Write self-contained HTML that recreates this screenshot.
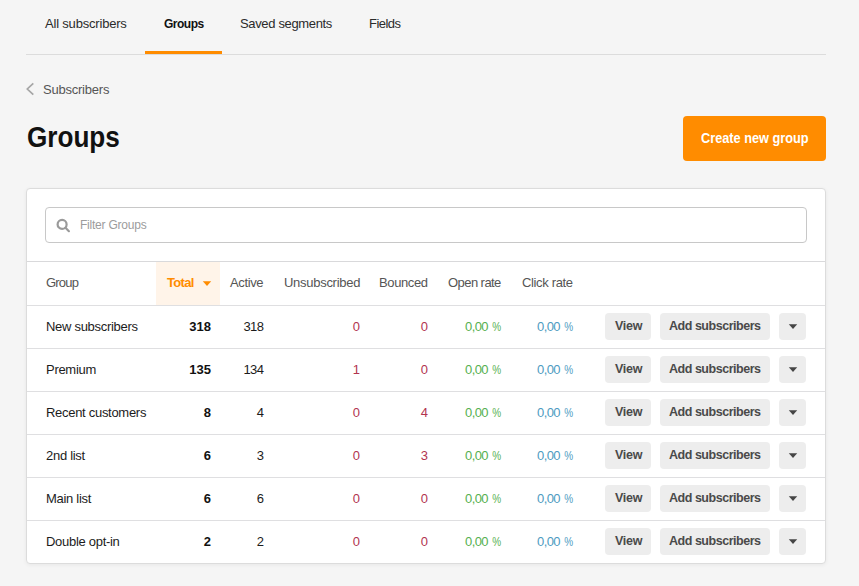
<!DOCTYPE html>
<html><head><meta charset="utf-8"><style>
*{box-sizing:border-box;margin:0;padding:0}
html,body{width:859px;height:586px;overflow:hidden;background:#f5f5f5;font-family:"Liberation Sans",sans-serif;color:#222}
.r0{position:absolute}
.t{position:absolute;white-space:nowrap;line-height:16px;font-size:13px}
.tab{color:#2b2b2b;font-size:13px}
.act{font-weight:bold;color:#111;font-size:12px}
.crumb{color:#555;font-size:13px}
.h1{font-size:29px;line-height:32px;font-weight:bold;color:#111;transform:scaleX(0.9);transform-origin:0 50%}
.obtn{background:#ff8c00;border-radius:4px}
.obt{color:#fff;font-weight:bold;font-size:14px;transform:scaleX(0.91);transform-origin:0 50%}
.card{background:#fff;border:1px solid #dcdcdc;border-radius:4px;box-shadow:0 1px 4px rgba(0,0,0,.06)}
.search{border:1px solid #c8c8c8;border-radius:4px}
.ph{color:#9c9c9c;font-size:12px}
.hd{color:#555}
.tot{color:#ff8c00;font-weight:bold}
.td{color:#1c1c1c}
.b{font-weight:bold;color:#111}
.red{color:#b2344f}
.grn{color:#55b04f}
.pcs{font-size:12.5px;transform:scaleX(0.8);transform-origin:100% 50%;margin-top:0.5px}
.blu{color:#4d9bc1}
.gbtn{background:#ededed;border-radius:4px}
.gbt{color:#4a4a4a;font-weight:bold;font-size:12.5px}
</style></head><body>
<div class="t tab" style="left:45px;top:15.5px;letter-spacing:-0.190px">All subscribers</div>
<div class="t tab act" style="left:164px;top:15.5px;letter-spacing:-0.502px">Groups</div>
<div class="t tab" style="left:240px;top:15.5px;letter-spacing:-0.343px">Saved segments</div>
<div class="t tab" style="left:369px;top:15.5px;letter-spacing:-0.540px">Fields</div>
<div class="r0" style="left:26px;top:54px;width:800px;height:1px;background:#dcdcdc"></div>
<div class="r0" style="left:145px;top:51px;width:77px;height:3px;background:#ff8c00"></div>
<svg class="r0" style="left:24px;top:81px" width="14" height="16" viewBox="0 0 14 16"><path d="M9.3 2.3 L3.3 8 L9.3 13.7" fill="none" stroke="#a6a6a6" stroke-width="1.7"/></svg>
<div class="t crumb" style="left:43px;top:81.6px;letter-spacing:-0.225px">Subscribers</div>
<div class="t h1" style="left:27px;top:121px;letter-spacing:0.000px">Groups</div>
<div class="r0 obtn" style="left:683px;top:116px;width:143px;height:45px"></div>
<div class="t obt" style="left:701px;top:130px;letter-spacing:0.000px">Create new group</div>
<div class="r0 card" style="left:26px;top:188px;width:800px;height:376px"></div>
<div class="r0 search" style="left:45px;top:207px;width:762px;height:36px"></div>
<svg class="r0" style="left:55px;top:217px" width="16" height="16" viewBox="0 0 16 16"><circle cx="7.1" cy="7.4" r="4.5" fill="none" stroke="#9a9a9a" stroke-width="2.2"/><path d="M10.5 10.8 L13.9 14.2" stroke="#9a9a9a" stroke-width="2.2" stroke-linecap="round"/></svg>
<div class="t ph" style="left:80px;top:217px;letter-spacing:-0.225px">Filter Groups</div>
<div class="r0" style="left:27px;top:261px;width:798px;height:1px;background:#d9d9db"></div>
<div class="r0" style="left:156px;top:262px;width:64px;height:43px;background:#fff4e9"></div>
<div class="t hd" style="left:46px;top:274.5px;letter-spacing:-0.789px">Group</div>
<div class="t hd tot" style="left:167px;top:274.5px;letter-spacing:-0.675px">Total</div>
<svg class="r0" style="left:202px;top:280px" width="10" height="7" viewBox="0 0 10 7"><path d="M0.8 1.2 L9.2 1.2 L5 6 Z" fill="#ff8c00"/></svg>
<div class="t hd" style="left:230px;top:274.5px;letter-spacing:-0.360px">Active</div>
<div class="t hd" style="left:284px;top:274.5px;letter-spacing:-0.281px">Unsubscribed</div>
<div class="t hd" style="left:379px;top:274.5px;letter-spacing:-0.375px">Bounced</div>
<div class="t hd" style="left:448px;top:274.5px;letter-spacing:-0.559px">Open rate</div>
<div class="t hd" style="left:522px;top:274.5px;letter-spacing:-0.350px">Click rate</div>
<div class="r0" style="left:27px;top:305px;width:798px;height:1px;background:#dfdfe1"></div>
<div class="t td" style="left:46px;top:318.5px;letter-spacing:-0.292px">New subscribers</div>
<div class="t td b" style="right:648.020px;top:318.5px;letter-spacing:-0.020px">318</div>
<div class="t td" style="right:595.570px;top:318.5px;letter-spacing:-0.570px">318</div>
<div class="t td red" style="right:499.000px;top:318.5px;letter-spacing:0.000px">0</div>
<div class="t td red" style="right:431.000px;top:318.5px;letter-spacing:0.000px">0</div>
<div class="t td grn" style="right:371.000px;top:318.5px;letter-spacing:-0.600px">0,00</div>
<div class="t td grn pcs" style="right:357.400px;top:318.5px;letter-spacing:0.000px">%</div>
<div class="t td blu" style="right:299.000px;top:318.5px;letter-spacing:-0.600px">0,00</div>
<div class="t td blu pcs" style="right:286.200px;top:318.5px;letter-spacing:0.000px">%</div>
<div class="r0 gbtn" style="left:605px;top:313px;width:46px;height:27px"></div>
<div class="t gbt" style="left:615px;top:318.0px;letter-spacing:-0.280px">View</div>
<div class="r0 gbtn" style="left:660px;top:313px;width:110px;height:27px"></div>
<div class="t gbt" style="left:669px;top:318.0px;letter-spacing:-0.471px">Add subscribers</div>
<div class="r0 gbtn" style="left:779px;top:313px;width:27px;height:27px"></div>
<svg class="r0" style="left:788px;top:323px" width="10" height="7" viewBox="0 0 10 7"><path d="M0.8 1.2 L9.2 1.2 L5 6 Z" fill="#454545"/></svg>
<div class="r0" style="left:27px;top:348px;width:798px;height:1px;background:#dfdfe1"></div>
<div class="t td" style="left:46px;top:361.5px;letter-spacing:-0.292px">Premium</div>
<div class="t td b" style="right:648.020px;top:361.5px;letter-spacing:-0.020px">135</div>
<div class="t td" style="right:595.570px;top:361.5px;letter-spacing:-0.570px">134</div>
<div class="t td red" style="right:499.000px;top:361.5px;letter-spacing:0.000px">1</div>
<div class="t td red" style="right:431.000px;top:361.5px;letter-spacing:0.000px">0</div>
<div class="t td grn" style="right:371.000px;top:361.5px;letter-spacing:-0.600px">0,00</div>
<div class="t td grn pcs" style="right:357.400px;top:361.5px;letter-spacing:0.000px">%</div>
<div class="t td blu" style="right:299.000px;top:361.5px;letter-spacing:-0.600px">0,00</div>
<div class="t td blu pcs" style="right:286.200px;top:361.5px;letter-spacing:0.000px">%</div>
<div class="r0 gbtn" style="left:605px;top:356px;width:46px;height:27px"></div>
<div class="t gbt" style="left:615px;top:361.0px;letter-spacing:-0.280px">View</div>
<div class="r0 gbtn" style="left:660px;top:356px;width:110px;height:27px"></div>
<div class="t gbt" style="left:669px;top:361.0px;letter-spacing:-0.471px">Add subscribers</div>
<div class="r0 gbtn" style="left:779px;top:356px;width:27px;height:27px"></div>
<svg class="r0" style="left:788px;top:366px" width="10" height="7" viewBox="0 0 10 7"><path d="M0.8 1.2 L9.2 1.2 L5 6 Z" fill="#454545"/></svg>
<div class="r0" style="left:27px;top:391px;width:798px;height:1px;background:#dfdfe1"></div>
<div class="t td" style="left:46px;top:404.5px;letter-spacing:-0.292px">Recent customers</div>
<div class="t td b" style="right:648.020px;top:404.5px;letter-spacing:-0.020px">8</div>
<div class="t td" style="right:595.570px;top:404.5px;letter-spacing:-0.570px">4</div>
<div class="t td red" style="right:499.000px;top:404.5px;letter-spacing:0.000px">0</div>
<div class="t td red" style="right:431.000px;top:404.5px;letter-spacing:0.000px">4</div>
<div class="t td grn" style="right:371.000px;top:404.5px;letter-spacing:-0.600px">0,00</div>
<div class="t td grn pcs" style="right:357.400px;top:404.5px;letter-spacing:0.000px">%</div>
<div class="t td blu" style="right:299.000px;top:404.5px;letter-spacing:-0.600px">0,00</div>
<div class="t td blu pcs" style="right:286.200px;top:404.5px;letter-spacing:0.000px">%</div>
<div class="r0 gbtn" style="left:605px;top:399px;width:46px;height:27px"></div>
<div class="t gbt" style="left:615px;top:404.0px;letter-spacing:-0.280px">View</div>
<div class="r0 gbtn" style="left:660px;top:399px;width:110px;height:27px"></div>
<div class="t gbt" style="left:669px;top:404.0px;letter-spacing:-0.471px">Add subscribers</div>
<div class="r0 gbtn" style="left:779px;top:399px;width:27px;height:27px"></div>
<svg class="r0" style="left:788px;top:409px" width="10" height="7" viewBox="0 0 10 7"><path d="M0.8 1.2 L9.2 1.2 L5 6 Z" fill="#454545"/></svg>
<div class="r0" style="left:27px;top:434px;width:798px;height:1px;background:#dfdfe1"></div>
<div class="t td" style="left:46px;top:447.5px;letter-spacing:-0.292px">2nd list</div>
<div class="t td b" style="right:648.020px;top:447.5px;letter-spacing:-0.020px">6</div>
<div class="t td" style="right:595.570px;top:447.5px;letter-spacing:-0.570px">3</div>
<div class="t td red" style="right:499.000px;top:447.5px;letter-spacing:0.000px">0</div>
<div class="t td red" style="right:431.000px;top:447.5px;letter-spacing:0.000px">3</div>
<div class="t td grn" style="right:371.000px;top:447.5px;letter-spacing:-0.600px">0,00</div>
<div class="t td grn pcs" style="right:357.400px;top:447.5px;letter-spacing:0.000px">%</div>
<div class="t td blu" style="right:299.000px;top:447.5px;letter-spacing:-0.600px">0,00</div>
<div class="t td blu pcs" style="right:286.200px;top:447.5px;letter-spacing:0.000px">%</div>
<div class="r0 gbtn" style="left:605px;top:442px;width:46px;height:27px"></div>
<div class="t gbt" style="left:615px;top:447.0px;letter-spacing:-0.280px">View</div>
<div class="r0 gbtn" style="left:660px;top:442px;width:110px;height:27px"></div>
<div class="t gbt" style="left:669px;top:447.0px;letter-spacing:-0.471px">Add subscribers</div>
<div class="r0 gbtn" style="left:779px;top:442px;width:27px;height:27px"></div>
<svg class="r0" style="left:788px;top:452px" width="10" height="7" viewBox="0 0 10 7"><path d="M0.8 1.2 L9.2 1.2 L5 6 Z" fill="#454545"/></svg>
<div class="r0" style="left:27px;top:477px;width:798px;height:1px;background:#dfdfe1"></div>
<div class="t td" style="left:46px;top:490.5px;letter-spacing:-0.292px">Main list</div>
<div class="t td b" style="right:648.020px;top:490.5px;letter-spacing:-0.020px">6</div>
<div class="t td" style="right:595.570px;top:490.5px;letter-spacing:-0.570px">6</div>
<div class="t td red" style="right:499.000px;top:490.5px;letter-spacing:0.000px">0</div>
<div class="t td red" style="right:431.000px;top:490.5px;letter-spacing:0.000px">0</div>
<div class="t td grn" style="right:371.000px;top:490.5px;letter-spacing:-0.600px">0,00</div>
<div class="t td grn pcs" style="right:357.400px;top:490.5px;letter-spacing:0.000px">%</div>
<div class="t td blu" style="right:299.000px;top:490.5px;letter-spacing:-0.600px">0,00</div>
<div class="t td blu pcs" style="right:286.200px;top:490.5px;letter-spacing:0.000px">%</div>
<div class="r0 gbtn" style="left:605px;top:485px;width:46px;height:27px"></div>
<div class="t gbt" style="left:615px;top:490.0px;letter-spacing:-0.280px">View</div>
<div class="r0 gbtn" style="left:660px;top:485px;width:110px;height:27px"></div>
<div class="t gbt" style="left:669px;top:490.0px;letter-spacing:-0.471px">Add subscribers</div>
<div class="r0 gbtn" style="left:779px;top:485px;width:27px;height:27px"></div>
<svg class="r0" style="left:788px;top:495px" width="10" height="7" viewBox="0 0 10 7"><path d="M0.8 1.2 L9.2 1.2 L5 6 Z" fill="#454545"/></svg>
<div class="r0" style="left:27px;top:520px;width:798px;height:1px;background:#dfdfe1"></div>
<div class="t td" style="left:46px;top:533.5px;letter-spacing:-0.292px">Double opt-in</div>
<div class="t td b" style="right:648.020px;top:533.5px;letter-spacing:-0.020px">2</div>
<div class="t td" style="right:595.570px;top:533.5px;letter-spacing:-0.570px">2</div>
<div class="t td red" style="right:499.000px;top:533.5px;letter-spacing:0.000px">0</div>
<div class="t td red" style="right:431.000px;top:533.5px;letter-spacing:0.000px">0</div>
<div class="t td grn" style="right:371.000px;top:533.5px;letter-spacing:-0.600px">0,00</div>
<div class="t td grn pcs" style="right:357.400px;top:533.5px;letter-spacing:0.000px">%</div>
<div class="t td blu" style="right:299.000px;top:533.5px;letter-spacing:-0.600px">0,00</div>
<div class="t td blu pcs" style="right:286.200px;top:533.5px;letter-spacing:0.000px">%</div>
<div class="r0 gbtn" style="left:605px;top:528px;width:46px;height:27px"></div>
<div class="t gbt" style="left:615px;top:533.0px;letter-spacing:-0.280px">View</div>
<div class="r0 gbtn" style="left:660px;top:528px;width:110px;height:27px"></div>
<div class="t gbt" style="left:669px;top:533.0px;letter-spacing:-0.471px">Add subscribers</div>
<div class="r0 gbtn" style="left:779px;top:528px;width:27px;height:27px"></div>
<svg class="r0" style="left:788px;top:538px" width="10" height="7" viewBox="0 0 10 7"><path d="M0.8 1.2 L9.2 1.2 L5 6 Z" fill="#454545"/></svg>
</body></html>
